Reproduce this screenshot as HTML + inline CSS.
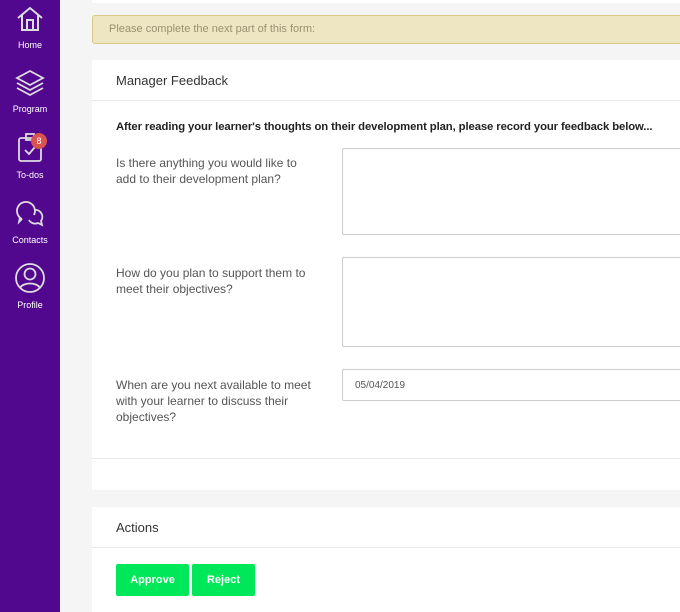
<!DOCTYPE html>
<html><head><style>
*{box-sizing:border-box;margin:0;padding:0}
body{width:680px;height:612px;overflow:hidden;background:#f5f5f5;font-family:"Liberation Sans",sans-serif;position:relative}
.side{position:absolute;left:0;top:0;width:60px;height:612px;background:#51078e}
.nav{position:absolute;left:0;width:60px;text-align:center;color:#fff;font-size:9px}
.nav svg{display:block;margin:0 auto 6px}
.topbar{position:absolute;left:92px;top:0;right:0;height:3px;background:#fff}
.alert{position:absolute;left:92px;top:15px;width:600px;height:29px;background:#eee6c2;border:1px solid #d9c987;border-radius:3px;color:#9a9070;font-size:11px;padding:7px 0 0 16px}
.card{position:absolute;left:92px;width:600px;background:#fff}
.hd{height:41px;border-bottom:1px solid #e8e8e8;padding:13px 0 0 24px;font-size:13px;color:#333}
.lbl{position:absolute;left:24px;font-size:12px;color:#555;line-height:16px;width:200px}
.box{position:absolute;left:250px;width:360px;border:1px solid #ccc;border-radius:2px;background:#fff}
.btn{position:absolute;top:57px;height:32px;background:#00e85a;color:#fff;font-weight:bold;font-size:11px;text-align:center;line-height:32px;border-radius:2px}
</style></head><body>
<div class="side">
<div class="nav" style="top:4px"><svg width="30" height="30" viewBox="0 0 30 30" fill="none" stroke="#ddd" stroke-width="2"><path d="M3 14L15 4l12 10M7 11v15h16V11M12 26v-10h6v10"/></svg>Home</div>
<div class="nav" style="top:68px"><svg width="32" height="30" viewBox="0 0 32 30" fill="none" stroke="#ddd" stroke-width="1.8"><path d="M16 3L3 10l13 7 13-7z M3 15l13 7 13-7 M3 20l13 7 13-7"/></svg>Program</div>
<div class="nav" style="top:132px"><svg width="30" height="32" viewBox="0 0 30 32" fill="none" stroke="#ddd" stroke-width="1.8"><rect x="4" y="6" width="22" height="23" rx="2"/><rect x="11" y="2" width="8" height="6"/><path d="M10 18l4 4 6-7"/></svg>To-dos</div>
<div style="position:absolute;left:31px;top:133px;width:16px;height:16px;border-radius:50%;background:#d9534f;color:#fff;font-size:9px;text-align:center;line-height:16px">8</div>
<div class="nav" style="top:197px"><svg width="30" height="32" viewBox="0 0 30 32" fill="none" stroke="#ddd" stroke-width="1.8"><path d="M7 22A9 9 0 1 1 19 18"/><path d="M7 22l-3 3 1-5"/><path d="M19 18a7 7 0 1 1 0 0M19 13a7 7 0 0 1 7 11l1 4-4-2a7 7 0 0 1-9-3"/></svg>Contacts</div>
<div class="nav" style="top:262px"><svg width="32" height="32" viewBox="0 0 32 32" fill="none" stroke="#ddd" stroke-width="1.8"><circle cx="16" cy="16" r="14"/><circle cx="16" cy="12" r="5.5"/><path d="M6 26c3-6 17-6 20 0"/></svg>Profile</div>
</div>
<div class="topbar"></div>
<div class="alert">Please complete the next part of this form:</div>
<div class="card" style="top:60px;height:430px">
<div class="hd">Manager Feedback</div>
<div style="position:absolute;left:24px;top:61px;font-size:11.3px;font-weight:bold;color:#222;white-space:nowrap;letter-spacing:-0.1px">After reading your learner's thoughts on their development plan, please record your feedback below...</div>
<div class="lbl" style="top:95px">Is there anything you would like to add to their development plan?</div>
<div class="box" style="top:88px;height:87px"></div>
<div class="lbl" style="top:205px">How do you plan to support them to meet their objectives?</div>
<div class="box" style="top:197px;height:90px"></div>
<div class="lbl" style="top:317px">When are you next available to meet with your learner to discuss their objectives?</div>
<div class="box" style="top:309px;height:32px;font-size:10px;color:#555;padding:10px 0 0 12px">05/04/2019</div>
<div style="position:absolute;left:0;right:0;top:398px;border-top:1px solid #e8e8e8"></div>
</div>
<div class="card" style="top:507px;height:105px">
<div class="hd">Actions</div>
<div class="btn" style="left:24px;width:73px">Approve</div>
<div class="btn" style="left:100px;width:63px">Reject</div>
</div>
</body></html>
